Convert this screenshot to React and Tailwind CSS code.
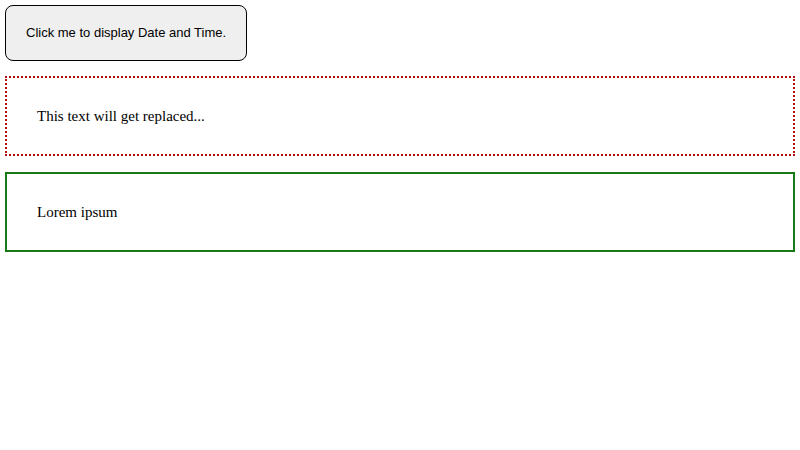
export default function App() {
  return (
    <div className="p-[5px] bg-white min-h-[450px] font-['Liberation_Serif',serif] text-black">
      <button className="block px-5 py-5 bg-[#efefef] border border-black rounded-lg text-[13px] leading-[14px] font-['Liberation_Sans',Arial,sans-serif]">
        Click me to display Date and Time.
      </button>
      <div className="mt-[15px] border-2 border-dotted border-[#b01010] px-[30px] py-[29px] text-[15px] leading-[18px]">
        This text will get replaced...
      </div>
      <div className="mt-4 border-2 border-[#1a7a1a] px-[30px] py-[29px] text-[15px] leading-[18px]">
        Lorem ipsum
      </div>
    </div>
  );
}
